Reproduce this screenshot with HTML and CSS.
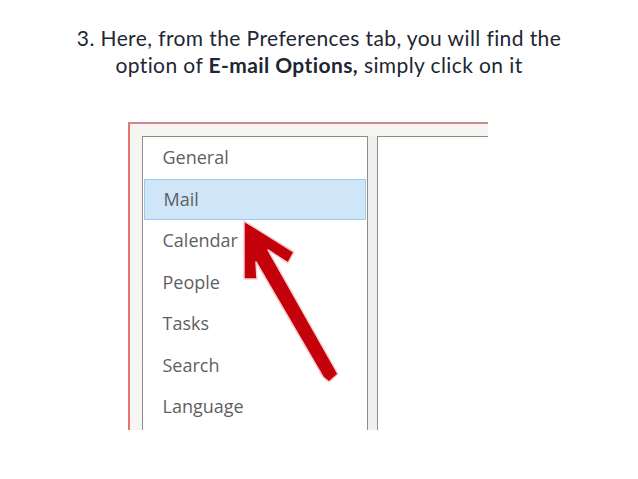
FILE: index.html
```html
<!DOCTYPE html>
<html>
<head>
<meta charset="utf-8">
<link rel="stylesheet" href="styles.css">
</head>
<body>
<div class="slide">
  <p class="caption">3. Here, from the Preferences tab, you will find the<br>option of <b>E-mail Options,</b> simply click on it</p>
  <div class="shot">
    <div class="frame">
      <div class="nav">
        <div class="item">General</div>
        <div class="item sel">Mail</div>
        <div class="item">Calendar</div>
        <div class="item">People</div>
        <div class="item">Tasks</div>
        <div class="item">Search</div>
        <div class="item">Language</div>
      </div>
      <div class="divider"></div>
      <div class="content"></div>
    </div>
    <svg class="arrow" width="120" height="180" viewBox="230 210 120 180">
      <polygon points="244,221 294,252 288,263 268,250 338,374 329,382 323,377 256,262 257,279 244,279" fill="#c4000b" stroke="#f7d0d0" stroke-width="1.5" stroke-linejoin="round"/>
    </svg>
  </div>
</div>
</body>
</html>
```
FILE: styles.css
```css
html, body {
  margin: 0;
  padding: 0;
  background: #ffffff;
}
.slide {
  width: 638px;
  height: 479px;
  overflow: hidden;
}
.caption {
  margin: 0;
  padding-top: 24px;
  font-family: Lato, "Open Sans", sans-serif;
  font-size: 21px;
  letter-spacing: 0.4px;
  line-height: 27px;
  text-align: center;
  color: #1e2633;
}
.caption b {
  font-weight: 700;
}
.shot {
  position: relative;
  margin-top: 44px;
  margin-left: 128px;
  width: 360px;
  height: 308px;
  overflow: hidden;
}
.frame {
  box-sizing: border-box;
  height: 308px;
  border-top: 2px solid #c78f8c;
  border-left: 2px solid #e4766f;
  background: linear-gradient(#fdf1f1, #f4f6f2 8px, #f6f6f4);
  padding: 12px 0 0 12px;
  display: flex;
}
.nav {
  width: 224px;
  border: 1.5px solid #8c8c8c;
  border-bottom: none;
  background: #ffffff;
  font-family: "Open Sans", "Noto Sans", sans-serif;
  font-size: 18px;
  color: #5f5f5f;
}
.item {
  height: 41.5px;
  line-height: 41.5px;
  padding-left: 19.5px;
  box-sizing: border-box;
}
.item.sel {
  background: #cfe6f8;
  border: 1px solid #9fc9ea;
  margin: 0 1px;
  padding-left: 18.5px;
  line-height: 39.5px;
}
.divider {
  width: 9px;
  background: #efefef;
}
.content {
  flex: 1;
  border-top: 1.5px solid #8c8c8c;
  border-left: 1.5px solid #8c8c8c;
  background: #ffffff;
}
.arrow {
  position: absolute;
  left: 102px;
  top: 88px;
}
```
